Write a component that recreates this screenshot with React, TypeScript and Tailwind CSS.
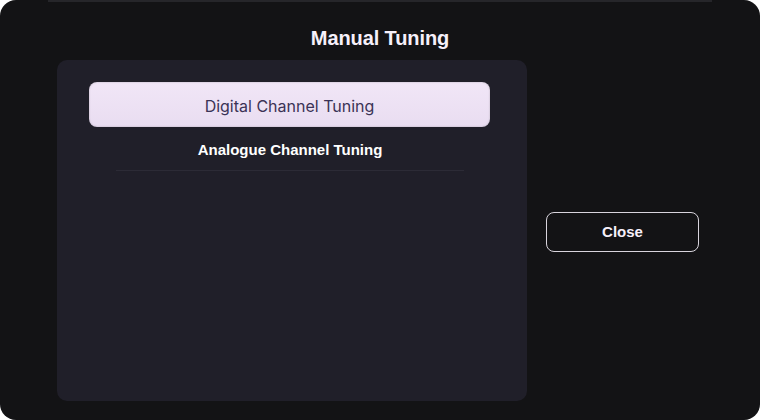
import React from 'react';

const items = [
  { label: 'Digital Channel Tuning', active: true },
  { label: 'Analogue Channel Tuning', active: false },
];

const App = () => {
  return (
    <div className="w-[760px] h-[420px] bg-white">
      <div className="relative flex flex-col w-full h-full bg-[#131315] rounded-[16px] overflow-hidden font-['Liberation_Sans',sans-serif]">
        <div className="h-[2px] mx-[48px] bg-[#26262a]" />
        <h1 className="mt-[24px] h-[34px] text-center text-[20px] leading-[24px] font-bold tracking-[-0.1px] text-[#f6f0fa]">
          Manual Tuning
        </h1>
        <div className="flex items-center gap-[19px] pl-[57px]">
          <div className="w-[470px] h-[341px] bg-[#201f29] rounded-[10px] pt-[22px]">
            {items.map((item) =>
              item.active ? (
                <div
                  key={item.label}
                  className="ml-[32px] w-[401px] h-[45px] pt-[2px] flex items-center justify-center rounded-[8px] bg-gradient-to-b from-[#f1e6f7] to-[#e9ddf1] shadow-[inset_0_0_2px_rgba(0,0,0,0.25)] text-[16px] text-[#3b3356] font-['Inter',sans-serif]"
                >
                  {item.label}
                </div>
              ) : (
                <div key={item.label} className="ml-[59px] w-[348px]">
                  <div className="h-[43px] pt-[4px] flex items-center justify-center text-[15px] font-bold text-white">
                    {item.label}
                  </div>
                  <div className="h-px bg-[#2c2b36]" />
                </div>
              )
            )}
          </div>
          <button className="mt-[3px] w-[153px] h-[40px] rounded-[8px] border border-[#d8d4dc] text-[15px] font-bold text-[#f6f0fa]">
            Close
          </button>
        </div>
      </div>
    </div>
  );
};

export default App;
